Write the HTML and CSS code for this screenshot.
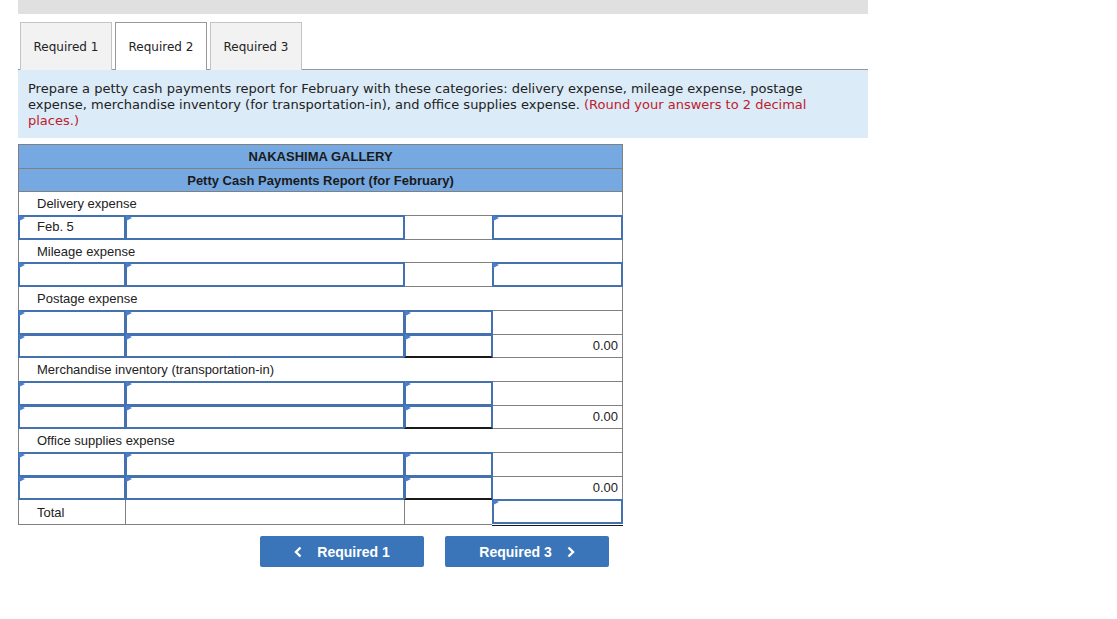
FILE: index.html
```html
<!DOCTYPE html>
<html>
<head>
<meta charset="utf-8">
<link rel="stylesheet" href="styles.css">
</head>
<body>
<div class="page">
  <div class="topbar"></div>
  <div class="tabs">
    <div class="tab">Required 1</div>
    <div class="tab active">Required 2</div>
    <div class="tab">Required 3</div>
  </div>
  <div class="instr">Prepare a petty cash payments report for February with these categories: delivery expense, mileage expense, postage expense, merchandise inventory (for transportation-in), and office supplies expense. <span class="red">(Round your answers to 2 decimal places.)</span></div>

  <table class="rep">
    <colgroup><col class="c1"><col class="c2"><col class="c3"><col class="c4"></colgroup>
    <tr class="hd"><td colspan="4">NAKASHIMA GALLERY</td></tr>
    <tr class="hd"><td colspan="4">Petty Cash Payments Report (for February)</td></tr>
    <tr><td colspan="4" class="lbl">Delivery expense</td></tr>
    <tr>
      <td class="in"><div class="box flag lbltxt">Feb. 5</div></td>
      <td class="in"><div class="box flag"></div></td>
      <td></td>
      <td class="in"><div class="box flag"></div></td>
    </tr>
    <tr><td colspan="4" class="lbl">Mileage expense</td></tr>
    <tr>
      <td class="in"><div class="box flag"></div></td>
      <td class="in"><div class="box flag"></div></td>
      <td></td>
      <td class="in"><div class="box flag"></div></td>
    </tr>
    <tr><td colspan="4" class="lbl">Postage expense</td></tr>
    <tr>
      <td class="in"><div class="box flag"></div></td>
      <td class="in"><div class="box flag"></div></td>
      <td class="in"><div class="box flag"></div></td>
      <td></td>
    </tr>
    <tr>
      <td class="in"><div class="box flag"></div></td>
      <td class="in"><div class="box flag"></div></td>
      <td class="in"><div class="box flag under"></div></td>
      <td class="num">0.00</td>
    </tr>
    <tr><td colspan="4" class="lbl">Merchandise inventory (transportation-in)</td></tr>
    <tr>
      <td class="in"><div class="box flag"></div></td>
      <td class="in"><div class="box flag"></div></td>
      <td class="in"><div class="box flag"></div></td>
      <td></td>
    </tr>
    <tr>
      <td class="in"><div class="box flag"></div></td>
      <td class="in"><div class="box flag"></div></td>
      <td class="in"><div class="box flag under"></div></td>
      <td class="num">0.00</td>
    </tr>
    <tr><td colspan="4" class="lbl">Office supplies expense</td></tr>
    <tr>
      <td class="in"><div class="box flag"></div></td>
      <td class="in"><div class="box flag"></div></td>
      <td class="in"><div class="box flag"></div></td>
      <td></td>
    </tr>
    <tr>
      <td class="in"><div class="box flag"></div></td>
      <td class="in"><div class="box flag"></div></td>
      <td class="in"><div class="box flag under"></div></td>
      <td class="num">0.00</td>
    </tr>
    <tr>
      <td class="lbl">Total</td>
      <td></td>
      <td></td>
      <td class="in total"><div class="box flag"></div></td>
    </tr>
  </table>

  <div class="nav">
    <div class="btn"><svg class="chev" width="8" height="12" viewBox="0 0 8 12"><path d="M6.5 1.5 L2 6 L6.5 10.5" fill="none" stroke="#fff" stroke-width="2.4"/></svg>Required 1</div>
    <div class="btn">Required 3<svg class="chev r" width="8" height="12" viewBox="0 0 8 12"><path d="M1.5 1.5 L6 6 L1.5 10.5" fill="none" stroke="#fff" stroke-width="2.4"/></svg></div>
  </div>
</div>
</body>
</html>
```

FILE: styles.css
```css
html, body { margin: 0; padding: 0; background: #fff; }
.page { padding-left: 18px; width: 850px; }
.topbar { height: 14px; background: #e0e0e0; }
.tabs { display: flex; gap: 3px; margin-top: 8px; padding-left: 2px; border-bottom: 1px solid #999; height: 47px; }
.tab {
  width: 92px; box-sizing: border-box; height: 48px;
  background: #f2f2f2; border: 1px solid #c4c4c4; border-bottom: none;
  font-family: "DejaVu Sans", Verdana, sans-serif; font-size: 12px; color: #222;
  display: flex; align-items: center; justify-content: center; padding-top: 1px;
}
.tab.active { background: #fff; border-color: #999; height: 48px; position: relative; z-index: 1; }
.instr {
  background: #dbebf8; padding: 11px 10px 9px 10px;
  font-family: "DejaVu Sans", Verdana, sans-serif; font-size: 13px; line-height: 16px; color: #222;
}
.red { color: #c0202c; }
.rep {
  margin-top: 6px; border-collapse: collapse; width: 605px;
  font-family: "Liberation Sans", Arial, sans-serif; font-size: 13px; color: #222;
  table-layout: fixed;
}
.c1 { width: 107px; } .c2 { width: 279px; } .c3 { width: 88px; } .c4 { width: 130px; }
.rep td { border: 1px solid #808080; height: 22.7px; padding: 0; }
.rep tr.hd td { background: #76a9e1; text-align: center; font-weight: bold; color: #1a1a1a; }
.rep td.lbl { padding-left: 18px; }
.rep td.num { text-align: right; padding-right: 4px; }
.rep td.in { position: relative; }
.box { position: absolute; inset: -1px; border: 2px solid #4472b0; box-sizing: border-box; }
.box.under { border-bottom-color: #1a1a1a; }
.lbltxt { padding-left: 17px; line-height: 20px; }
.flag::before {
  content: ""; position: absolute; left: -1px; top: -2px;
  border-left: 6px solid #4a7fd0; border-top: 3px solid transparent; border-bottom: 3px solid transparent;
}
.rep td.total { border-bottom: 3px double #1a1a1a; }
.nav { display: flex; gap: 21px; margin-top: 10px; margin-left: 242px; }
.btn {
  width: 164px; height: 31px; background: #3a75ba; color: #fff; border-radius: 2px;
  font-family: "Liberation Sans", Arial, sans-serif; font-weight: bold; font-size: 14px;
  display: flex; align-items: center; justify-content: center;
}
.chev { margin-right: 15px; }
.chev.r { margin-right: 0; margin-left: 15px; }
```
